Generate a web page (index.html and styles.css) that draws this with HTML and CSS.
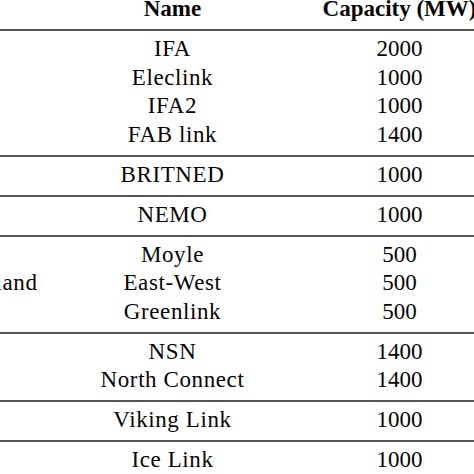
FILE: index.html
```html
<!DOCTYPE html>
<html lang="en">
<head>
<meta charset="utf-8">
<title>Interconnectors</title>
<link rel="stylesheet" href="styles.css">
</head>
<body>
<div class="table">
  <div class="row head">
    <div class="c1">Country</div>
    <div class="c2">Name</div>
    <div class="c3">Capacity (MW)</div>
  </div>
  <div class="row group">
    <div class="c1">France</div>
    <div class="c2"><div>IFA</div><div>Eleclink</div><div>IFA2</div><div>FAB link</div></div>
    <div class="c3"><div>2000</div><div>1000</div><div>1000</div><div>1400</div></div>
  </div>
  <div class="row group">
    <div class="c1">Netherlands</div>
    <div class="c2"><div>BRITNED</div></div>
    <div class="c3"><div>1000</div></div>
  </div>
  <div class="row group">
    <div class="c1">Belgium</div>
    <div class="c2"><div>NEMO</div></div>
    <div class="c3"><div>1000</div></div>
  </div>
  <div class="row group">
    <div class="c1">Northern Ireland</div>
    <div class="c2"><div>Moyle</div><div>East-West</div><div>Greenlink</div></div>
    <div class="c3"><div>500</div><div>500</div><div>500</div></div>
  </div>
  <div class="row group">
    <div class="c1">Norway</div>
    <div class="c2"><div>NSN</div><div>North Connect</div></div>
    <div class="c3"><div>1400</div><div>1400</div></div>
  </div>
  <div class="row group">
    <div class="c1">Denmark</div>
    <div class="c2"><div>Viking Link</div></div>
    <div class="c3"><div>1000</div></div>
  </div>
  <div class="row group">
    <div class="c1">Iceland</div>
    <div class="c2"><div>Ice Link</div></div>
    <div class="c3"><div>1000</div></div>
  </div>
</div>
</body>
</html>
```
FILE: styles.css
```css
html {
  overflow: hidden;
  background: #ffffff;
}
body {
  margin: 0;
  background: #ffffff;
  color: #050505;
  font-family: "Liberation Serif", "Times New Roman", serif;
  font-size: 23px;
}
.table {
  width: 640px;
  margin-left: -126px;
}
.row {
  display: grid;
  grid-template-columns: 186px 225px 229px;
  line-height: 28.5px;
}
.c1 {
  text-align: left;
  white-space: nowrap;
  align-self: center;
  letter-spacing: 0.6px;
}
.c2 {
  text-align: center;
  white-space: nowrap;
  letter-spacing: 0.6px;
}
.c3 {
  text-align: center;
  white-space: nowrap;
}
.head {
  font-weight: bold;
  line-height: 18px;
  padding-bottom: 11px;
}
.head .c2, .head .c3 {
  letter-spacing: 0;
}
.group {
  border-top: 2px solid #555555;
  padding-top: 4px;
  padding-bottom: 5.5px;
}
```
